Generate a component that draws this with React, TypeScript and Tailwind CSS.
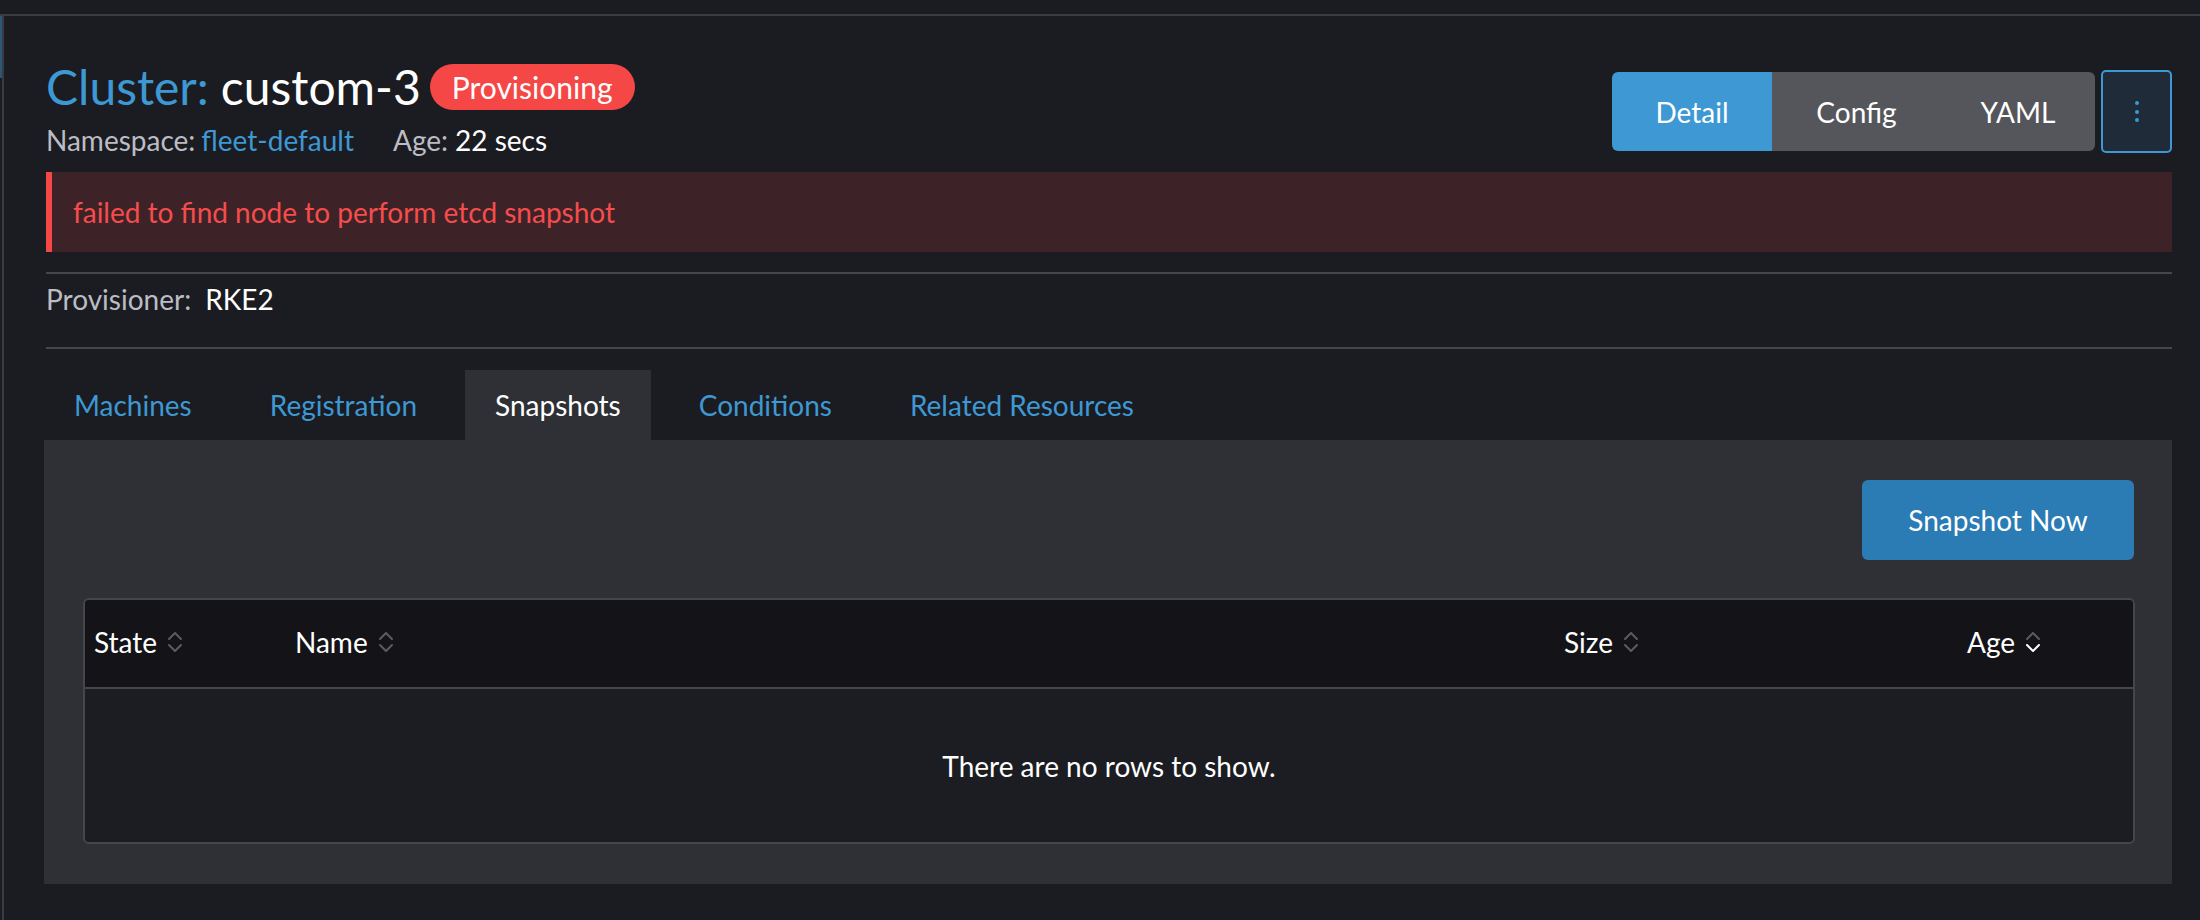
import React from "react";

function SortIcon({ active }: { active?: boolean }) {
  return (
    <svg width="16" height="24" viewBox="0 0 16 24" className="ml-[10px] shrink-0">
      <polyline points="2,9 8,3 14,9" fill="none" stroke="#5b5c62" strokeWidth="2" strokeLinecap="round" strokeLinejoin="round" />
      <polyline points="2,15 8,21 14,15" fill="none" stroke={active ? "#ffffff" : "#5b5c62"} strokeWidth="2" strokeLinecap="round" strokeLinejoin="round" />
    </svg>
  );
}

function HeaderCell({ label, active }: { label: string; active?: boolean }) {
  return (
    <div className="flex items-center pl-[9px] pb-[4px] text-[28px] text-white">
      <span>{label}</span>
      <SortIcon active={active} />
    </div>
  );
}

export default function App() {
  const tabs = ["Machines", "Registration", "Snapshots", "Conditions", "Related Resources"];
  return (
    <div className="w-[2200px] h-[920px] bg-[#1b1c21] overflow-hidden font-['Lato',sans-serif]">
      <div className="mt-[14px] border-t-2 border-[#3a3b40] h-[906px] flex">
        <div className="w-[2px] shrink-0">
          <div className="h-[62px] bg-[#2c5677]" />
        </div>
        <div className="flex-1 border-l-2 border-[#3a3b40] pl-[42px] pr-[28px]">
          {/* Header */}
          <div className="pt-[47px] flex justify-between items-start">
            <div>
              <div className="h-[48px] flex items-center">
                <span className="text-[48px] leading-[48px] text-[#3d98d3]">Cluster:</span>
                <span className="text-[48px] leading-[48px] text-white ml-[12px]">custom-3</span>
                <span className="ml-[9px] h-[46px] px-[22px] rounded-full bg-[#f64747] text-white text-[30px] flex items-center">
                  Provisioning
                </span>
              </div>
              <div className="mt-[14px] h-[30px] flex items-center text-[28px] leading-[30px]">
                <span className="text-[#bcbdc4]">Namespace:</span>
                <span className="text-[#3d98d3] ml-[6px]">fleet-default</span>
                <span className="text-[#bcbdc4] ml-[39px]">Age:</span>
                <span className="text-white ml-[7px]">22 secs</span>
              </div>
            </div>
            <div className="mt-[7px] flex items-center gap-[6px]">
              <div className="flex h-[79px] rounded-[6px] overflow-hidden text-[28px] text-white">
                <div className="w-[160px] bg-[#3d98d3] flex items-center justify-center">Detail</div>
                <div className="w-[169px] bg-[#55565b] flex items-center justify-center">Config</div>
                <div className="w-[154px] bg-[#55565b] flex items-center justify-center">YAML</div>
              </div>
              <div className="w-[71px] h-[83px] rounded-[5px] border-2 border-[#3d98d3] bg-[#1f2b39] flex flex-col items-center justify-center gap-[4.5px]">
                <div className="w-[4px] h-[4px] rounded-full bg-[#3d98d3]" />
                <div className="w-[4px] h-[4px] rounded-full bg-[#3d98d3]" />
                <div className="w-[4px] h-[4px] rounded-full bg-[#3d98d3]" />
              </div>
            </div>
          </div>

          {/* Alert */}
          <div className="mt-[17px] h-[80px] flex bg-[#3d2328]">
            <div className="w-[6px] bg-[#f64747]" />
            <div className="pl-[21px] flex items-center text-[28px] text-[#f64c4c]">
              failed to find node to perform etcd snapshot
            </div>
          </div>

          <div className="mt-[20px] h-[2px] bg-[#45464c]" />
          <div className="mt-[10px] h-[30px] flex items-center text-[28px] leading-[30px]">
            <span className="text-[#bcbdc4]">Provisioner:</span>
            <span className="text-white ml-[14px]">RKE2</span>
          </div>
          <div className="mt-[33px] h-[2px] bg-[#45464c]" />

          {/* Tabs */}
          <div className="-ml-[2px] mt-[21px] h-[70px] flex gap-[18px]">
            {tabs.map((t) => (
              <div
                key={t}
                className={
                  t === "Snapshots"
                    ? "h-full px-[30px] flex items-center text-[28px] text-white bg-[#2f3036]"
                    : "h-full px-[30px] flex items-center text-[28px] text-[#3d98d3]"
                }
              >
                {t}
              </div>
            ))}
          </div>

          {/* Panel */}
          <div className="-ml-[2px] bg-[#2f3036] pt-[40px] pb-[40px] pl-[39px] pr-[37px]">
            <div className="flex justify-end">
              <div className="w-[272px] h-[80px] rounded-[6px] bg-[#2b7bb4] text-white text-[28px] flex items-center justify-center mr-[1px]">
                Snapshot Now
              </div>
            </div>
            <div className="mt-[38px] border-2 border-[#45464c] rounded-[6px] overflow-hidden">
              <div className="h-[89px] bg-[#141418] grid grid-cols-[201px_1269px_403px_175px] items-center border-b-2 border-[#45464c]">
                <HeaderCell label="State" />
                <HeaderCell label="Name" />
                <HeaderCell label="Size" />
                <HeaderCell label="Age" active />
              </div>
              <div className="h-[153px] bg-[#1c1d22] flex items-center justify-center text-[28px] text-white">
                There are no rows to show.
              </div>
            </div>
          </div>
        </div>
      </div>
    </div>
  );
}
